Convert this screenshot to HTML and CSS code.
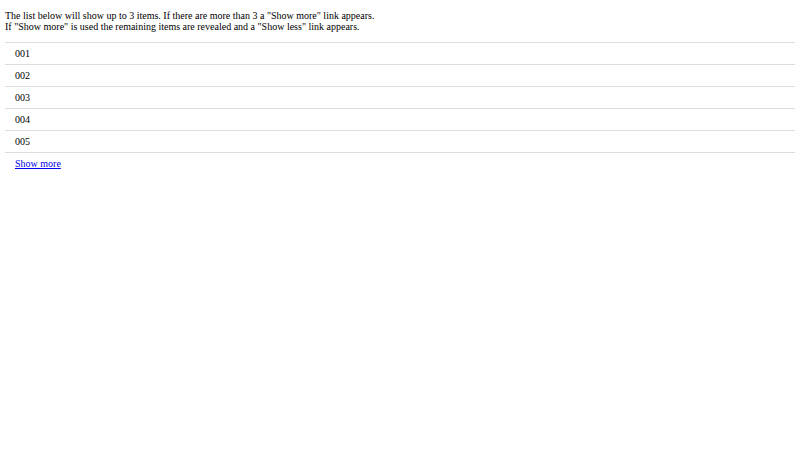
FILE: index.html
```html
<!DOCTYPE html>
<html>
<head>
<meta charset="utf-8">
<link rel="stylesheet" href="styles.css">
</head>
<body>
<div class="intro">
<p>The list below will show up to 3 items. If there are more than 3 a "Show more" link appears.</p>
<p>If "Show more" is used the remaining items are revealed and a "Show less" link appears.</p>
</div>
<ul class="list">
<li class="item">001</li>
<li class="item">002</li>
<li class="item">003</li>
<li class="item">004</li>
<li class="item">005</li>
</ul>
<div class="more"><a href="#" class="more-link">Show more</a></div>
</body>
</html>
```
FILE: styles.css
```css
html, body { margin: 0; padding: 0; background: #fff; }
body {
  padding: 10px 5px 0 5px;
  font-family: "Liberation Serif", "Times New Roman", serif;
  font-size: 10px;
  line-height: 11px;
  color: #000;
}
.intro p { margin: 0; }
.list {
  list-style: none;
  margin: 10px 0 0 0;
  padding: 0;
  border-top: 1px solid #ddd;
}
.item {
  padding: 5px 10px;
  border-bottom: 1px solid #ddd;
  line-height: 11px;
}
.more { padding: 5px 10px; }
.more-link { color: #0000ee; }
```
